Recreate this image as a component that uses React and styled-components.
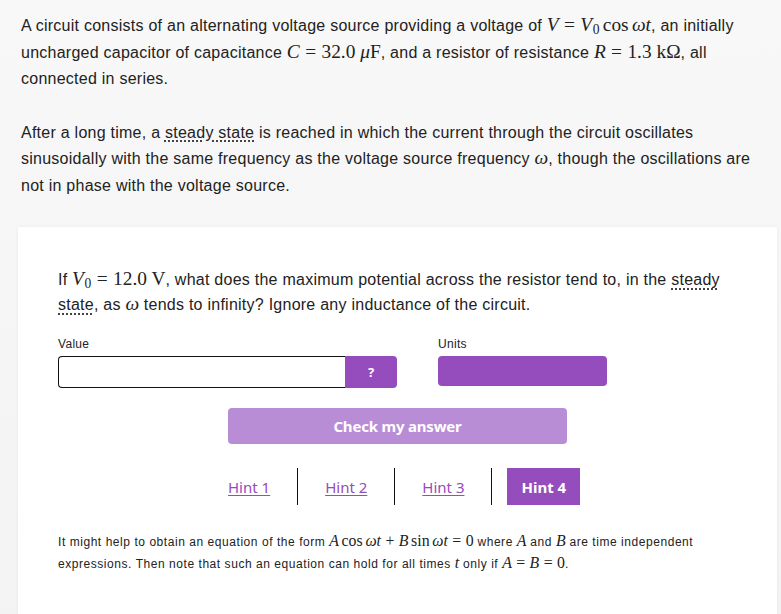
import React from 'react'
import styled, { createGlobalStyle } from 'styled-components'

const Global = createGlobalStyle`
	body {
		margin: 0;
		background: #f5f5f5;
		font-family: 'Liberation Sans', Arial, sans-serif;
		color: #222;
	}
`

const Page = styled.div`
	height: 614px;
	background: linear-gradient(#f8f8f8, #f3f3f3);
	overflow: hidden;
`

const Intro = styled.div`
	padding: 13px 21px 28px 21px;
`

const Para = styled.p`
	margin: 0 0 27px 0;
	font-size: 16px;
	line-height: 26.5px;
	letter-spacing: 0.25px;
	&:last-child {
		margin-bottom: 0;
	}
`

const Card = styled.div`
	background: #fff;
	margin: 0 4px 0 18px;
	padding: 40px;
	min-height: 400px;
	box-shadow: 0 0 3px rgba(0, 0, 0, 0.06);
`

const Question = styled.p`
	margin: 0;
	font-size: 16px;
	line-height: 25px;
	letter-spacing: 0.25px;
`

const Glossary = styled.span`
	text-decoration: underline dotted #444;
	text-decoration-thickness: 2px;
	text-underline-offset: 3px;
`

/* math, sized like KaTeX relative to the text around it */
const M = styled.span`
	font-family: 'Liberation Serif', 'Times New Roman', serif;
	font-size: 1.21em;
	line-height: 1;
	letter-spacing: 0;
	white-space: nowrap;
`

const V = styled.i`
	font-style: italic;
`

const Sub = styled.span`
	font-size: 0.7em;
	position: relative;
	top: 0.2em;
	margin-left: 0.05em;
`

const Op = styled.span`
	padding: 0 0.28em;
`

const Fn = styled.span`
	padding: 0 0.17em;
`

const Fields = styled.div`
	display: flex;
	gap: 41px;
	margin-top: 20px;
`

const Field = styled.div`
	display: flex;
	flex-direction: column;
`

const Label = styled.label`
	font-size: 12px;
	line-height: 14px;
	letter-spacing: 0.3px;
	margin-bottom: 5px;
`

const InputGroup = styled.div`
	display: flex;
	width: 339px;
	height: 32px;
`

const Input = styled.input`
	flex: 1;
	min-width: 0;
	border: 1px solid #111;
	border-right: none;
	border-radius: 4px 0 0 4px;
	outline: none;
	padding: 0 8px;
	font-size: 14px;
`

const Help = styled.button`
	width: 52px;
	border: none;
	background: #954cbc;
	color: #fff;
	border-radius: 0 4px 4px 0;
	font-family: 'Noto Sans', sans-serif;
	font-weight: 700;
	font-size: 13px;
`

const Select = styled.div`
	width: 169px;
	height: 30px;
	background: #954cbc;
	border-radius: 4px;
`

const Center = styled.div`
	width: 339px;
	margin: 0 auto;
`

const Check = styled.button`
	display: block;
	width: 339px;
	height: 36px;
	margin-top: 20px;
	border: none;
	border-radius: 4px;
	background: #b98cd6;
	color: #fff;
	font-family: 'Noto Sans', sans-serif;
	font-weight: 700;
	font-size: 15px;
	letter-spacing: -0.2px;
`

const Hints = styled.div`
	display: flex;
	align-items: center;
	height: 37px;
	margin: 24px 0 0 -14px;
`

const Hint = styled.a`
	display: flex;
	flex-shrink: 0;
	align-items: center;
	height: 37px;
	padding: 0 14px;
	font-family: 'Noto Sans', sans-serif;
	font-size: 15px;
	color: ${(p) => (p.active ? '#fff' : '#954cbc')};
	background: ${(p) => (p.active ? '#954cbc' : 'transparent')};
	font-weight: ${(p) => (p.active ? 700 : 400)};
	text-decoration: ${(p) => (p.active ? 'none' : 'underline')};
	text-underline-offset: 2px;
	white-space: nowrap;
`

const Sep = styled.span`
	flex-shrink: 0;
	width: 1px;
	height: 37px;
	background: #111;
	margin: 0 ${(p) => p.right || 13}px 0 13px;
`

const HintText = styled.p`
	margin: 26px 0 0 0;
	font-size: 12px;
	line-height: 22px;
	letter-spacing: 0.55px;
	${M} {
		font-size: 1.32em;
	}
`

const App = () => {
	return (
		<Page>
			<Global />
			<Intro>
				<Para>
					A circuit consists of an alternating voltage source providing a voltage of{' '}
					<M>
						<V>V</V>
						<Op>=</Op>
						<V>V</V>
						<Sub>0</Sub>
						<Fn>cos</Fn>
						<V>ωt</V>
					</M>
					, an initially uncharged capacitor of capacitance{' '}
					<M>
						<V>C</V>
						<Op>=</Op>32.0 <V>μ</V>F
					</M>
					, and a resistor of resistance{' '}
					<M>
						<V>R</V>
						<Op>=</Op>1.3 kΩ
					</M>
					, all connected in series.
				</Para>
				<Para>
					After a long time, a <Glossary>steady state</Glossary> is reached in which the current
					through the circuit oscillates sinusoidally with the same frequency as the voltage
					source frequency{' '}
					<M>
						<V>ω</V>
					</M>
					, though the oscillations are not in phase with the voltage source.
				</Para>
			</Intro>
			<Card>
				<Question>
					If{' '}
					<M>
						<V>V</V>
						<Sub>0</Sub>
						<Op>=</Op>12.0 V
					</M>
					, what does the maximum potential across the resistor tend to, in the{' '}
					<Glossary>steady state</Glossary>, as{' '}
					<M>
						<V>ω</V>
					</M>{' '}
					tends to infinity? Ignore any inductance of the circuit.
				</Question>
				<Fields>
					<Field>
						<Label>Value</Label>
						<InputGroup>
							<Input type='text' />
							<Help>?</Help>
						</InputGroup>
					</Field>
					<Field>
						<Label>Units</Label>
						<Select />
					</Field>
				</Fields>
				<Center>
					<Check>Check my answer</Check>
					<Hints>
						<Hint>Hint 1</Hint>
						<Sep />
						<Hint>Hint 2</Hint>
						<Sep />
						<Hint>Hint 3</Hint>
						<Sep right={15} />
						<Hint active>Hint 4</Hint>
					</Hints>
				</Center>
				<HintText>
					It might help to obtain an equation of the form{' '}
					<M>
						<V>A</V>
						<Fn>cos</Fn>
						<V>ωt</V>
						<Op>+</Op>
						<V>B</V>
						<Fn>sin</Fn>
						<V>ωt</V>
						<Op>=</Op>0
					</M>{' '}
					where{' '}
					<M>
						<V>A</V>
					</M>{' '}
					and{' '}
					<M>
						<V>B</V>
					</M>{' '}
					are time independent expressions. Then note that such an equation can hold for all
					times{' '}
					<M>
						<V>t</V>
					</M>{' '}
					only if{' '}
					<M>
						<V>A</V>
						<Op>=</Op>
						<V>B</V>
						<Op>=</Op>0
					</M>
					.
				</HintText>
			</Card>
		</Page>
	)
}

export default App
